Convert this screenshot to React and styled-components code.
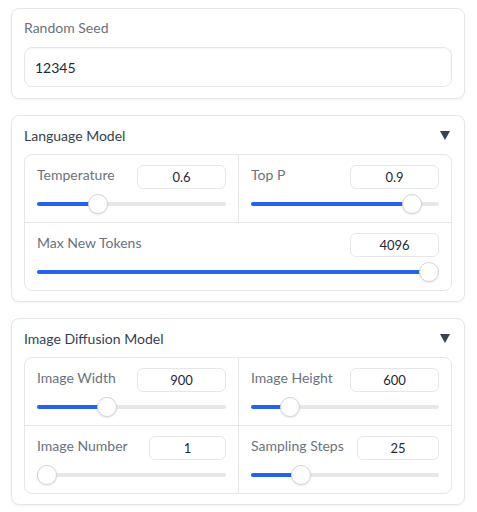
import React from "react";
import styled, { createGlobalStyle } from "styled-components";

const GlobalStyle = createGlobalStyle`
  body {
    margin: 0;
    background: #ffffff;
    font-family: Lato, "Noto Sans", sans-serif;
  }
`;

const Page = styled.div`
  display: flex;
  flex-direction: column;
  gap: 16px;
  padding: 8px 12px 8px 11px;
`;

const Card = styled.div`
  border: 1px solid #e5e7eb;
  border-radius: 8px;
  background: #fff;
  box-shadow: 0 1px 2px rgba(0, 0, 0, 0.05);
  padding: ${(p) => p.pad || "10px 12px 10px"};
  display: flex;
  flex-direction: column;
  gap: ${(p) => p.gap || 10}px;
`;

const Label = styled.div`
  font-size: 14px;
  line-height: 20px;
  color: #6b7280;
`;

const TextInput = styled.div`
  height: 40px;
  box-sizing: border-box;
  border: 1px solid #e5e7eb;
  border-radius: 8px;
  padding: 0 10px;
  display: flex;
  align-items: center;
  font-size: 14px;
  color: #1f2937;
  box-shadow: inset 0 1px 2px rgba(0, 0, 0, 0.04);
`;

const Header = styled.div`
  display: flex;
  justify-content: space-between;
  align-items: center;
  height: 18px;
  font-size: 14px;
  color: #374151;
`;

const Group = styled.div`
  border: 1px solid #e5e7eb;
  border-radius: 8px;
  display: grid;
  grid-template-columns: 1fr 1fr;
  overflow: hidden;
`;

const Cell = styled.div`
  grid-column: ${(p) => (p.wide ? "1 / span 2" : "auto")};
  padding: 10px 12px 8px;
  border-left: ${(p) => (p.right ? "1px solid #e5e7eb" : "none")};
  border-top: ${(p) => (p.lower ? "1px solid #e5e7eb" : "none")};
  display: flex;
  flex-direction: column;
  gap: 5px;
`;

const Top = styled.div`
  display: flex;
  justify-content: space-between;
  align-items: flex-start;
  height: 24px;
`;

const CellLabel = styled.span`
  font-size: 14px;
  line-height: 20px;
  color: #6b7280;
`;

const NumBox = styled.div`
  width: ${(p) => p.w}px;
  height: 24px;
  box-sizing: border-box;
  border: 1px solid #e5e7eb;
  border-radius: 6px;
  display: flex;
  align-items: center;
  justify-content: center;
  font-size: 13px;
  color: #1f2937;
`;

const Slider = styled.div`
  position: relative;
  height: 20px;
`;

const Track = styled.div`
  position: absolute;
  left: 0;
  right: 0;
  top: 8px;
  height: 4px;
  border-radius: 2px;
  background: #e5e7eb;
`;

const Fill = styled.div`
  height: 100%;
  border-radius: 2px;
  background: #2563eb;
`;

const Thumb = styled.div`
  position: absolute;
  top: 0;
  width: 20px;
  height: 20px;
  box-sizing: border-box;
  border-radius: 50%;
  background: #fff;
  border: 1px solid #d1d5db;
  box-shadow: 0 1px 2px rgba(0, 0, 0, 0.1);
  transform: translateX(-50%);
`;

const Caret = () => (
  <svg width="10" height="9" viewBox="0 0 10 9" style={{ marginRight: 2 }}>
    <polygon points="0,0 10,0 5,9" fill="#374151" />
  </svg>
);

const SliderField = ({ label, value, frac, w = 89, right, lower, wide }) => (
  <Cell right={right} lower={lower} wide={wide}>
    <Top>
      <CellLabel>{label}</CellLabel>
      <NumBox w={w}>{value}</NumBox>
    </Top>
    <Slider>
      <Track>
        <Fill style={{ width: `calc(10px + ${frac} * (100% - 20px))` }} />
      </Track>
      <Thumb style={{ left: `calc(10px + ${frac} * (100% - 20px))` }} />
    </Slider>
  </Cell>
);

const App = () => (
  <>
    <GlobalStyle />
    <Page>
      <Card gap={9} pad="9px 12px 11px">
        <Label>Random Seed</Label>
        <TextInput>12345</TextInput>
      </Card>
      <Card>
        <Header>
          <span>Language Model</span>
          <Caret />
        </Header>
        <Group>
          <SliderField label="Temperature" value="0.6" frac={0.3} />
          <SliderField label="Top P" value="0.9" frac={0.9} right />
          <SliderField label="Max New Tokens" value="4096" frac={1} lower wide />
        </Group>
      </Card>
      <Card>
        <Header>
          <span>Image Diffusion Model</span>
          <Caret />
        </Header>
        <Group>
          <SliderField label="Image Width" value="900" frac={0.355} />
          <SliderField label="Image Height" value="600" frac={0.17} right />
          <SliderField label="Image Number" value="1" frac={0} w={77} lower />
          <SliderField label="Sampling Steps" value="25" frac={0.24} w={82} right lower />
        </Group>
      </Card>
    </Page>
  </>
);

export default App;
